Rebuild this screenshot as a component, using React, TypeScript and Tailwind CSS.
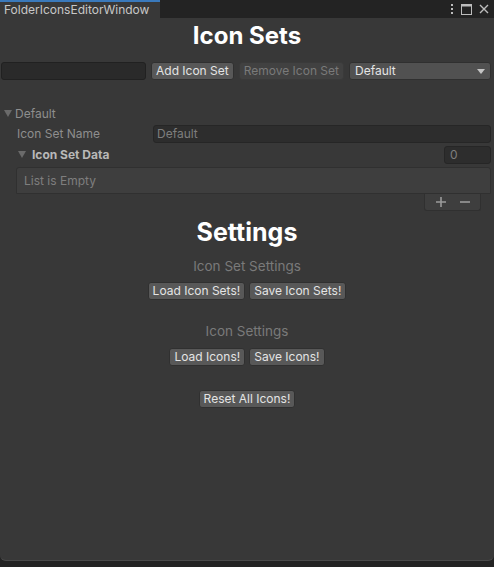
import React from "react";

const font = { fontFamily: "Inter, 'Noto Sans', sans-serif" };

function Btn({ children, disabled }: { children: React.ReactNode; disabled?: boolean }) {
  return (
    <div
      className={
        "h-[18px] px-[4px] shrink-0 whitespace-nowrap flex items-center rounded-[3px] text-[12px] leading-none border " +
        (disabled
          ? "bg-[#414141] border-[#3a3a3a] text-[#7a7a7a]"
          : "bg-[#585858] border-[#303030] text-[#e4e4e4]")
      }
    >
      {children}
    </div>
  );
}

export default function App() {
  return (
    <div className="w-[494px] h-[567px] bg-[#232323] flex flex-col overflow-hidden" style={font}>
      {/* Tab bar */}
      <div className="h-[18px] flex items-stretch bg-[#232323]">
        <div className="w-[160px] bg-[#383838] border-t-2 border-[#3a79bb] flex items-center pl-[4px] text-[12px] text-[#c8c8c8] whitespace-nowrap">
          FolderIconsEditorWindow
        </div>
        <div className="flex-1" />
        <div className="flex items-center gap-[7px] pr-[5px]">
          <svg width="4" height="12" viewBox="0 0 4 12">
            <rect x="1" y="1" width="2" height="2" fill="#bdbdbd" />
            <rect x="1" y="5" width="2" height="2" fill="#bdbdbd" />
            <rect x="1" y="9" width="2" height="2" fill="#bdbdbd" />
          </svg>
          <svg width="11" height="11" viewBox="0 0 11 11">
            <rect x="0.5" y="0.5" width="10" height="10" fill="none" stroke="#bdbdbd" />
            <rect x="0.5" y="0.5" width="10" height="2" fill="#bdbdbd" />
          </svg>
          <svg width="10" height="10" viewBox="0 0 10 10">
            <path d="M1 1L9 9M9 1L1 9" stroke="#bdbdbd" strokeWidth="1.4" />
          </svg>
        </div>
      </div>

      {/* Body */}
      <div className="h-[543px] bg-[#383838] rounded-b-[6px] border-b border-[#4a4a4a] flex flex-col">
        <div className="h-[34px] flex items-center justify-center text-white font-bold text-[24px] leading-none pt-[2px]">
          Icon Sets
        </div>

        <div className="flex items-center h-[18px] mt-[10px] pl-[1px] pr-[3px] gap-[5px]">
          <div className="w-[145px] shrink-0 h-[18px] rounded-[3px] bg-[#2a2a2a] border border-[#212121]" />
          <Btn>Add Icon Set</Btn>
          <Btn disabled>Remove Icon Set</Btn>
          <div className="flex-1 h-[18px] rounded-[3px] bg-[#515151] border border-[#303030] flex items-center justify-between px-[5px] text-[12px] text-[#e4e4e4]">
            <span>Default</span>
            <svg width="8" height="5" viewBox="0 0 8 5">
              <path d="M0 0H8L4 5Z" fill="#c4c4c4" />
            </svg>
          </div>
        </div>

        <div className="mt-[24px] h-[20px] flex items-center pl-[4px] gap-[2px] text-[12px] text-[#8e8e8e]">
          <svg width="9" height="8" viewBox="0 0 9 8">
            <path d="M0 0H8L4 7Z" fill="#6a6a6a" />
          </svg>
          <span>Default</span>
        </div>

        <div className="h-[20px] flex items-center pl-[17px] pr-[3px] text-[12px] text-[#8e8e8e]">
          <span className="w-[136px]">Icon Set Name</span>
          <div className="flex-1 h-[18px] rounded-[3px] bg-[#2d2d2d] border border-[#262626] flex items-center px-[3px] text-[#7e7e7e]">
            Default
          </div>
        </div>

        <div className="h-[22px] flex items-center pl-[18px] pr-[3px] text-[12px]">
          <svg width="9" height="8" viewBox="0 0 9 8">
            <path d="M0 0H8L4 7Z" fill="#6a6a6a" />
          </svg>
          <span className="ml-[5px] font-bold text-[#b8b8b8]">Icon Set Data</span>
          <div className="flex-1" />
          <div className="w-[47px] h-[18px] rounded-[3px] bg-[#2d2d2d] border border-[#262626] flex items-center px-[5px] text-[#7e7e7e]">
            0
          </div>
        </div>

        <div className="ml-[16px] mr-[3px] mt-[1px] h-[27px] rounded-t-[3px] bg-[#3e3e3e] border border-[#303030] flex items-center px-[7px] text-[12px] text-[#7e7e7e]">
          List is Empty
        </div>
        <div className="flex justify-end pr-[13px]">
          <div className="w-[57px] h-[17px] bg-[#3e3e3e] border border-t-0 border-[#303030] rounded-b-[3px] flex items-center justify-center gap-[14px]">
            <svg width="10" height="10" viewBox="0 0 10 10">
              <path d="M5 0V10M0 5H10" stroke="#9a9a9a" strokeWidth="1.6" />
            </svg>
            <svg width="10" height="10" viewBox="0 0 10 10">
              <path d="M0 5H10" stroke="#9a9a9a" strokeWidth="1.6" />
            </svg>
          </div>
        </div>

        <div className="mt-[9px] h-[24px] flex items-center justify-center text-white font-bold text-[25px] leading-none">
          Settings
        </div>

        <div className="mt-[14px] h-[16px] flex items-center justify-center text-[13.5px] text-[#7a7a7a]">
          Icon Set Settings
        </div>

        <div className="mt-[8px] flex justify-center gap-[4px]">
          <Btn>Load Icon Sets!</Btn>
          <Btn>Save Icon Sets!</Btn>
        </div>

        <div className="mt-[23px] h-[16px] flex items-center justify-center text-[13.5px] text-[#7a7a7a]">
          Icon Settings
        </div>

        <div className="mt-[9px] flex justify-center gap-[4px]">
          <Btn>Load Icons!</Btn>
          <Btn>Save Icons!</Btn>
        </div>

        <div className="mt-[24px] flex justify-center">
          <Btn>Reset All Icons!</Btn>
        </div>
      </div>
    </div>
  );
}
